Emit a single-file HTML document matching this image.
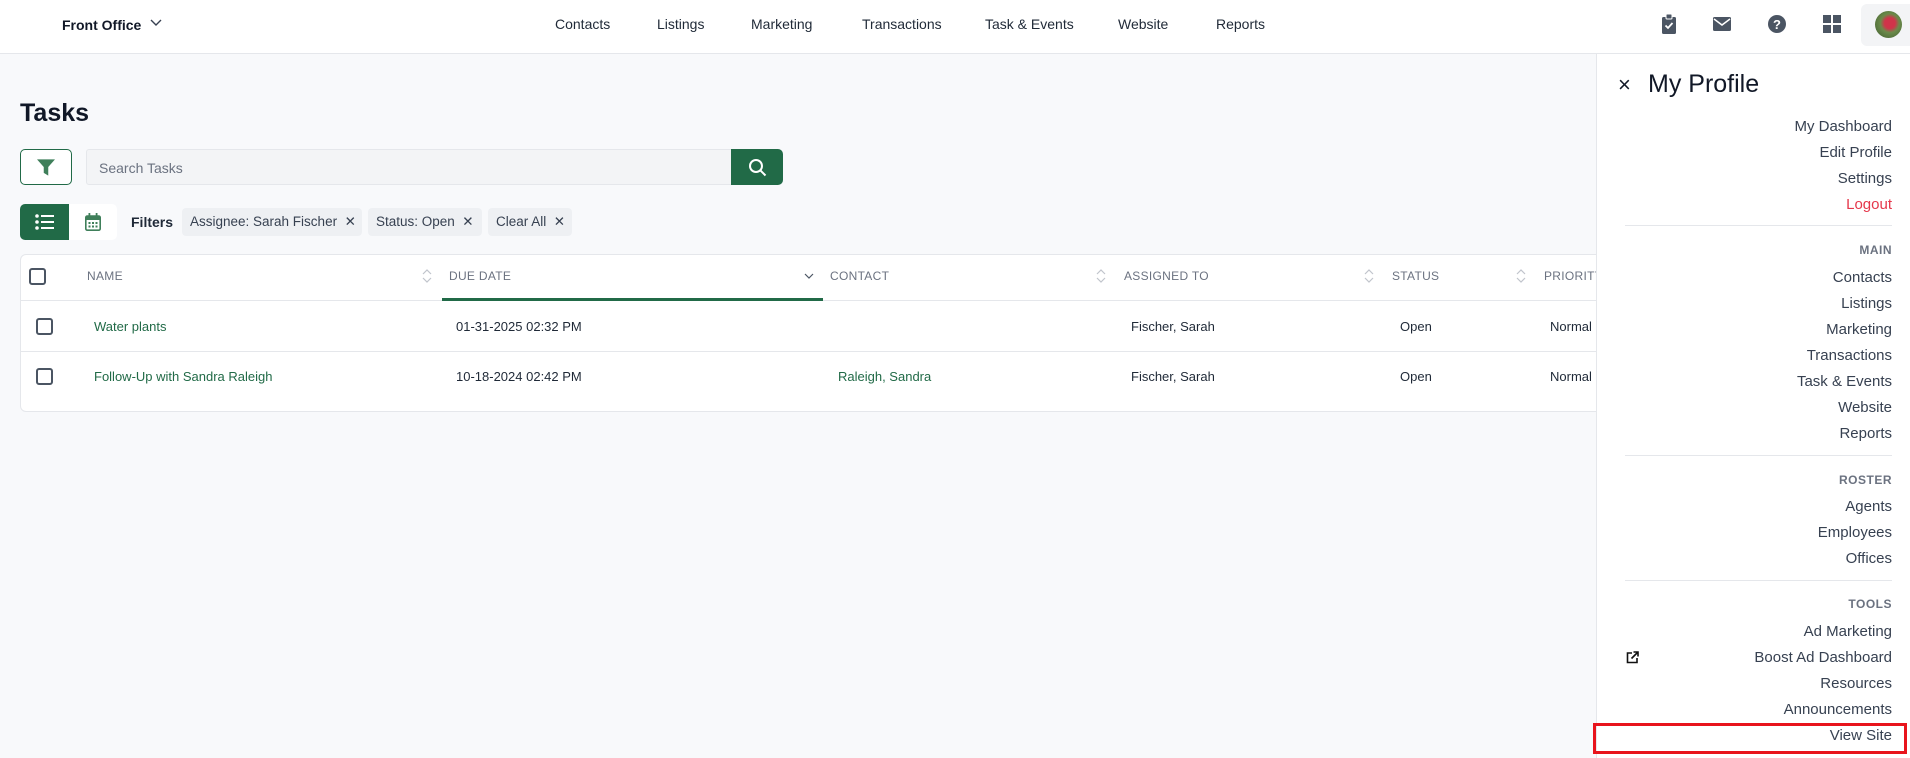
<!DOCTYPE html>
<html><head><meta charset="utf-8">
<style>
*{box-sizing:border-box;margin:0;padding:0}
body{width:1910px;height:758px;overflow:hidden;background:#f8f9fb;font-family:"Liberation Sans",sans-serif;color:#111827;position:relative}
.abs{position:absolute}
.hdr{left:0;top:0;width:1910px;height:54px;background:#fff;border-bottom:1px solid #e5e7eb}
.nav{top:16px;font-size:14px;color:#1f2937}
.tasks{left:20px;top:99px;font-size:25px;font-weight:bold;color:#111827}
.panel{left:1596px;top:54px;width:314px;height:704px;background:#fff;border-left:1px solid #e5e7eb}
.mi{right:18px;font-size:15px;color:#374151;text-align:right;white-space:nowrap}
.sec{right:18px;font-size:12px;font-weight:bold;color:#6b7280;letter-spacing:.5px}
.div{left:1625px;width:267px;height:1px;background:#e5e7eb}
.chip{top:208px;height:28px;background:#eef0f3;border-radius:4px;font-size:13.5px;color:#374151;line-height:28px;padding-left:8px;white-space:nowrap}
.th{top:269px;font-size:12px;color:#6b7280;letter-spacing:.3px;white-space:nowrap}
.td{font-size:13px;color:#1f2937;white-space:nowrap}
.g{color:#216a47}
.cb{width:17px;height:17px;border:2px solid #4b5563;border-radius:3px}
</style></head><body>
<div class="abs hdr"></div>
<div class="abs" style="left:62px;top:17px;font-size:14px;font-weight:bold;color:#111827">Front Office</div>
<svg class="abs" style="left:150px;top:19px" width="12" height="8" viewBox="0 0 12 8"><path d="M1 1l5 5 5-5" stroke="#374151" stroke-width="1.4" fill="none"/></svg>
<div class="abs nav" style="left:555px">Contacts</div>
<div class="abs nav" style="left:657px">Listings</div>
<div class="abs nav" style="left:751px">Marketing</div>
<div class="abs nav" style="left:862px">Transactions</div>
<div class="abs nav" style="left:985px">Task &amp; Events</div>
<div class="abs nav" style="left:1118px">Website</div>
<div class="abs nav" style="left:1216px">Reports</div>
<svg class="abs" style="left:1662px;top:14px" width="14" height="20" viewBox="0 0 14 20"><rect x="0" y="3" width="14" height="17" rx="1.5" fill="#4b5563"/><rect x="4" y="0" width="6" height="5" rx="1" fill="#4b5563" stroke="#fff" stroke-width="1"/><path d="M3.5 11.5l2.5 2.5 4.5-5" stroke="#fff" stroke-width="1.8" fill="none"/></svg>
<svg class="abs" style="left:1713px;top:17px" width="18" height="14" viewBox="0 0 18 14"><rect width="18" height="14" rx="1.5" fill="#4b5563"/><path d="M1 2l8 6 8-6" stroke="#fff" stroke-width="1.5" fill="none"/></svg>
<svg class="abs" style="left:1768px;top:15px" width="18" height="18" viewBox="0 0 18 18"><circle cx="9" cy="9" r="9" fill="#4b5563"/><text x="9" y="14" font-size="13" font-weight="bold" fill="#fff" text-anchor="middle" font-family="Liberation Sans">?</text></svg>
<svg class="abs" style="left:1823px;top:15px" width="18" height="18" viewBox="0 0 18 18"><rect width="8" height="8" fill="#4b5563"/><rect x="10" width="8" height="8" fill="#4b5563"/><rect y="10" width="8" height="8" fill="#4b5563"/><rect x="10" y="10" width="8" height="8" fill="#4b5563"/></svg>
<div class="abs" style="left:1861px;top:4px;width:49px;height:42px;background:#f3f4f6;border-radius:6px 0 0 6px"></div>
<div class="abs" style="left:1875px;top:11px;width:27px;height:27px;border-radius:50%;background:radial-gradient(circle at 55% 45%,#d0344a 0 25%,#6b8a4a 45%,#3e5a2e 100%)"></div>

<div class="abs tasks">Tasks</div>
<div class="abs" style="left:20px;top:149px;width:52px;height:36px;border:1px solid #216a47;border-radius:5px;background:#fff"></div>
<svg class="abs" style="left:37px;top:159px" width="18" height="17" viewBox="0 0 20 18"><path d="M0 0h20l-7.5 8.5V18l-5-3V8.5z" fill="#3f7f5a"/></svg>
<div class="abs" style="left:86px;top:149px;width:646px;height:36px;background:#f3f4f6;border:1px solid #e5e7eb;border-radius:3px 0 0 3px"></div>
<div class="abs" style="left:99px;top:160px;font-size:14px;color:#6b7280">Search Tasks</div>
<div class="abs" style="left:731px;top:149px;width:52px;height:36px;background:#216a47;border-radius:0 5px 5px 0"></div>
<svg class="abs" style="left:748px;top:158px" width="19" height="19" viewBox="0 0 19 19"><circle cx="8" cy="8" r="6" stroke="#fff" stroke-width="2" fill="none"/><path d="M12.5 12.5l5 5" stroke="#fff" stroke-width="2"/></svg>

<div class="abs" style="left:20px;top:204px;width:97px;height:36px;background:#fff;border-radius:5px"></div>
<div class="abs" style="left:20px;top:204px;width:49px;height:36px;background:#216a47;border-radius:5px 0 0 5px"></div>
<svg class="abs" style="left:35px;top:214px" width="19" height="16" viewBox="0 0 19 16"><g fill="#fff"><circle cx="2" cy="2" r="1.8"/><circle cx="2" cy="8" r="1.8"/><circle cx="2" cy="14" r="1.8"/><rect x="6" y="1" width="13" height="2"/><rect x="6" y="7" width="13" height="2"/><rect x="6" y="13" width="13" height="2"/></g></svg>
<svg class="abs" style="left:85px;top:213px" width="16" height="18" viewBox="0 0 16 18"><rect x="0.8" y="3" width="14.4" height="14.2" rx="1.5" stroke="#3f7f5a" stroke-width="1.6" fill="none"/><rect x="0.8" y="3" width="14.4" height="4" fill="#3f7f5a"/><rect x="3.5" y="0" width="1.8" height="4" fill="#3f7f5a"/><rect x="10.7" y="0" width="1.8" height="4" fill="#3f7f5a"/><g fill="#3f7f5a"><rect x="3.5" y="9" width="2" height="2"/><rect x="7" y="9" width="2" height="2"/><rect x="10.5" y="9" width="2" height="2"/><rect x="3.5" y="12.5" width="2" height="2"/><rect x="7" y="12.5" width="2" height="2"/><rect x="10.5" y="12.5" width="2" height="2"/></g></svg>
<div class="abs" style="left:131px;top:214px;font-size:14px;font-weight:bold;color:#1f2937">Filters</div>
<div class="abs chip" style="left:182px;width:180px">Assignee: Sarah Fischer &nbsp;✕</div>
<div class="abs chip" style="left:368px;width:114px">Status: Open &nbsp;✕</div>
<div class="abs chip" style="left:488px;width:84px">Clear All &nbsp;✕</div>

<div class="abs" style="left:20px;top:254px;width:1600px;height:158px;background:#fff;border:1px solid #e5e7eb;border-radius:6px"></div>
<div class="abs" style="left:20px;top:300px;width:1600px;height:1px;background:#e5e7eb"></div>
<div class="abs" style="left:20px;top:351px;width:1600px;height:1px;background:#e5e7eb"></div>
<div class="abs" style="left:442px;top:298px;width:381px;height:3px;background:#216a47"></div>
<div class="abs cb" style="left:29px;top:268px"></div>
<div class="abs th" style="left:87px">NAME</div>
<svg class="abs" style="left:422px;top:268px" width="10" height="16" viewBox="0 0 10 16"><path d="M1 6l4-4 4 4M1 10l4 4 4-4" stroke="#c0c4cc" stroke-width="1.2" fill="none"/></svg>
<div class="abs th" style="left:449px">DUE DATE</div>
<svg class="abs" style="left:804px;top:273px" width="10" height="6" viewBox="0 0 10 6"><path d="M1 1l4 4 4-4" stroke="#4b5563" stroke-width="1.2" fill="none"/></svg>
<div class="abs th" style="left:830px">CONTACT</div>
<svg class="abs" style="left:1096px;top:268px" width="10" height="16" viewBox="0 0 10 16"><path d="M1 6l4-4 4 4M1 10l4 4 4-4" stroke="#c0c4cc" stroke-width="1.2" fill="none"/></svg>
<div class="abs th" style="left:1124px">ASSIGNED TO</div>
<svg class="abs" style="left:1364px;top:268px" width="10" height="16" viewBox="0 0 10 16"><path d="M1 6l4-4 4 4M1 10l4 4 4-4" stroke="#c0c4cc" stroke-width="1.2" fill="none"/></svg>
<div class="abs th" style="left:1392px">STATUS</div>
<svg class="abs" style="left:1516px;top:268px" width="10" height="16" viewBox="0 0 10 16"><path d="M1 6l4-4 4 4M1 10l4 4 4-4" stroke="#c0c4cc" stroke-width="1.2" fill="none"/></svg>
<div class="abs th" style="left:1544px">PRIORITY</div>

<div class="abs cb" style="left:36px;top:318px"></div>
<div class="abs td g" style="left:94px;top:319px">Water plants</div>
<div class="abs td" style="left:456px;top:319px">01-31-2025 02:32 PM</div>
<div class="abs td" style="left:1131px;top:319px">Fischer, Sarah</div>
<div class="abs td" style="left:1400px;top:319px">Open</div>
<div class="abs td" style="left:1550px;top:319px">Normal</div>
<div class="abs cb" style="left:36px;top:368px"></div>
<div class="abs td g" style="left:94px;top:369px">Follow-Up with Sandra Raleigh</div>
<div class="abs td" style="left:456px;top:369px">10-18-2024 02:42 PM</div>
<div class="abs td g" style="left:838px;top:369px">Raleigh, Sandra</div>
<div class="abs td" style="left:1131px;top:369px">Fischer, Sarah</div>
<div class="abs td" style="left:1400px;top:369px">Open</div>
<div class="abs td" style="left:1550px;top:369px">Normal</div>

<div class="abs panel"></div>
<div class="abs" style="left:1618px;top:72px;font-size:22px;color:#111827">×</div>
<div class="abs" style="left:1648px;top:70px;font-size:25px;color:#111827">My Profile</div>
<div class="abs mi" style="top:118px">My Dashboard</div>
<div class="abs mi" style="top:144px">Edit Profile</div>
<div class="abs mi" style="top:170px">Settings</div>
<div class="abs mi" style="top:196px;color:#e5374b">Logout</div>
<div class="abs div" style="top:225px"></div>
<div class="abs sec" style="top:243px">MAIN</div>
<div class="abs mi" style="top:269px">Contacts</div>
<div class="abs mi" style="top:295px">Listings</div>
<div class="abs mi" style="top:321px">Marketing</div>
<div class="abs mi" style="top:347px">Transactions</div>
<div class="abs mi" style="top:373px">Task &amp; Events</div>
<div class="abs mi" style="top:399px">Website</div>
<div class="abs mi" style="top:425px">Reports</div>
<div class="abs div" style="top:455px"></div>
<div class="abs sec" style="top:473px">ROSTER</div>
<div class="abs mi" style="top:498px">Agents</div>
<div class="abs mi" style="top:524px">Employees</div>
<div class="abs mi" style="top:550px">Offices</div>
<div class="abs div" style="top:580px"></div>
<div class="abs sec" style="top:597px">TOOLS</div>
<div class="abs mi" style="top:623px">Ad Marketing</div>
<div class="abs mi" style="top:649px">Boost Ad Dashboard</div>
<svg class="abs" style="left:1626px;top:651px" width="13" height="13" viewBox="0 0 13 13"><path d="M6 2H1.5v9.5H11V7" stroke="#111" stroke-width="1.6" fill="none"/><path d="M7.5 1h4.5v4.5M12 1L5.5 7.5" stroke="#111" stroke-width="1.6" fill="none"/></svg>
<div class="abs mi" style="top:675px">Resources</div>
<div class="abs mi" style="top:701px">Announcements</div>
<div class="abs mi" style="top:727px">View Site</div>
<div class="abs" style="left:1593px;top:723px;width:314px;height:31px;border:3px solid #e8141c"></div>
</body></html>
